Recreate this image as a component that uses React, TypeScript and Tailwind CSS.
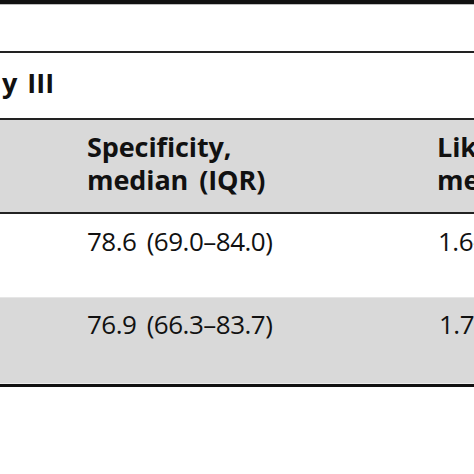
import React from "react";

export default function App() {
  const font = { fontFamily: '"Open Sans", "Liberation Sans", sans-serif' };
  return (
    <div className="w-[474px] h-[474px] bg-white overflow-hidden text-[#111]" style={font}>
      <div className="h-[4px] bg-[#111]" />
      <div className="h-[1px] bg-[#bdbdbd]" />
      <div className="h-[46px]" />
      <div className="h-[2px] bg-[#222]" />
      <div className="h-[65px] flex items-start pl-[2px] pt-[13px]">
        <span className="text-[27px] font-bold leading-[33px] whitespace-nowrap [word-spacing:3px]">y III</span>
      </div>
      <div className="h-[2px] bg-[#222]" />
      <div className="h-[92px] bg-[#d9d9d9] flex pt-[10px] text-[27px] font-bold leading-[33px] tracking-[-0.1px] [word-spacing:4px]">
        <div className="w-[87px] shrink-0" />
        <div className="w-[350px] shrink-0">
          <div>Specificity,</div>
          <div>median (IQR)</div>
        </div>
        <div className="whitespace-nowrap">
          <div>Likelihood ratio,</div>
          <div>median (IQR)</div>
        </div>
      </div>
      <div className="h-[2px] bg-[#222]" />
      <div className="h-[83px] flex pt-[11px] text-[26px] leading-[33px] tracking-[-0.5px] [word-spacing:4px]">
        <div className="w-[87px] shrink-0" />
        <div className="w-[351px] shrink-0 whitespace-nowrap">78.6 (69.0–84.0)</div>
        <div className="whitespace-nowrap">1.6–2.2</div>
      </div>
      <div className="h-[86px] bg-[#d9d9d9] border-t border-[#e6e6e6] flex pt-[10px] text-[26px] leading-[33px] tracking-[-0.5px] [word-spacing:4px]">
        <div className="w-[87px] shrink-0" />
        <div className="w-[352px] shrink-0 whitespace-nowrap">76.9 (66.3–83.7)</div>
        <div className="whitespace-nowrap">1.77</div>
      </div>
      <div className="h-[1px] bg-[#ececec]" />
      <div className="h-[3px] bg-[#111]" />
    </div>
  );
}
